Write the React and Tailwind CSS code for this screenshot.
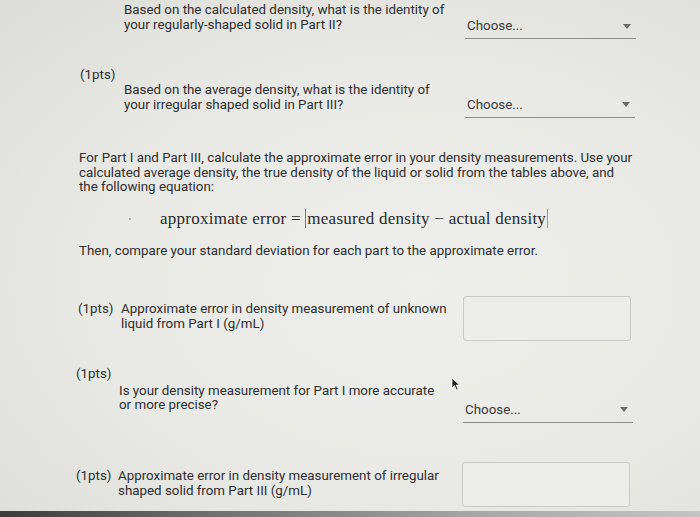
import React from "react";

// dropdown with underline, "Choose..." placeholder
function Choose({ className = "" }) {
  return (
    <div className={"flex items-center justify-between border-b border-[#8d8d8a] pl-[2px] pr-[5px] " + className}>
      <span className="text-[#3a3a3a]">Choose...</span>
      <svg width="8" height="5" viewBox="0 0 8 5">
        <path d="M0 0h8L4 5z" fill="#6a6a6a" />
      </svg>
    </div>
  );
}

function AnswerBox({ className = "" }) {
  return <div className={"h-[45px] rounded-[3px] border border-[#c9c9c5] bg-[#ececea] " + className} />;
}

const App = () => {
  return (
    <div
      className="relative h-[517px] w-[700px] overflow-hidden bg-[radial-gradient(ellipse_at_60%_55%,#eeeeec_0%,#e8e8e5_55%,#dcdcd8_100%)] text-[13.35px] leading-[14.5px] text-[#2f2f2f]"
      style={{ fontFamily: "Roboto, 'Liberation Sans', sans-serif" }}
    >
      {/* question about Part II */}
      <div className="flex pl-[124px] pt-[2px]">
        <div className="w-[341px] leading-[15px]">
          Based on the calculated density, what is the identity of
          <br />
          your regularly-shaped solid in Part II?
        </div>
        <Choose className="mt-[17px] w-[171px] pb-[4px]" />
      </div>

      {/* question about Part III */}
      <div className="mt-[28px] pl-[80px] leading-[15px]">(1pts)</div>
      <div className="flex pl-[124px]">
        <div className="w-[341px] leading-[15px]">
          Based on the average density, what is the identity of
          <br />
          your irregular shaped solid in Part III?
        </div>
        <Choose className="mt-[16px] w-[170px] pb-[5px]" />
      </div>

      {/* instructions */}
      <p className="mt-[33px] pl-[79px]">
        For Part I and Part III, calculate the approximate error in your density measurements. Use your
        <br />
        calculated average density, the true density of the liquid or solid from the tables above, and
        <br />
        the following equation:
      </p>

      <div className="mt-[15px] flex items-center leading-[18px]">
        <span className="ml-[129px] h-[2px] w-[2px] rounded-full bg-[#9a9a98]" />
        <span
          className="ml-[29px] text-[17px] tracking-[0.25px] text-[#2a2a2a]"
          style={{ fontFamily: "'Liberation Serif', 'DejaVu Serif', serif" }}
        >
          approximate error = <span className="border-l border-[#777] pl-[1px]">measured density − actual density</span>
          <span className="ml-[1px] border-l border-[#999]" />
        </span>
      </div>

      <p className="mt-[16px] pl-[79px]">Then, compare your standard deviation for each part to the approximate error.</p>

      {/* approximate error Part I */}
      <div className="mt-[38px] flex pl-[78px]">
        <div className="flex w-[385px] pt-[6px]">
          <span className="w-[43px]">(1pts)</span>
          <span>
            Approximate error in density measurement of unknown
            <br />
            liquid from Part I (g/mL)
          </span>
        </div>
        <AnswerBox className="w-[168px]" />
      </div>

      {/* accurate or precise */}
      <div className="relative">
        <div className="mt-[26px] pl-[76px]">(1pts)</div>
        <div className="mt-[2px] flex pl-[119px]">
          <div className="w-[344px]">
            Is your density measurement for Part I more accurate
            <br />
            or more precise?
          </div>
          <Choose className="mt-[19px] w-[170px] pb-[5px]" />
        </div>
        {/* mouse pointer */}
        <svg className="absolute left-[451px] top-[10px]" width="10" height="14" viewBox="0 0 10 14">
          <path d="M1 1v10l2.5-2.3L5.5 13l1.6-.7-2-4.2H8.5z" fill="#1d1d1d" stroke="#f4f4f4" strokeWidth="0.8" />
        </svg>
      </div>

      {/* approximate error Part III */}
      <div className="mt-[39px] flex pl-[76px]">
        <div className="flex w-[386px] pt-[7px]">
          <span className="w-[42px]">(1pts)</span>
          <span>
            Approximate error in density measurement of irregular
            <br />
            shaped solid from Part III (g/mL)
          </span>
        </div>
        <AnswerBox className="w-[168px]" />
      </div>

      {/* dark edge at the bottom of the photo */}
      <div className="absolute bottom-0 left-0 h-[6px] w-full bg-[linear-gradient(to_right,#3b3b3b,#6f6f6f_30%,#a9a9a7_70%,#c4c4c2)]" />
    </div>
  );
};

export default App;
